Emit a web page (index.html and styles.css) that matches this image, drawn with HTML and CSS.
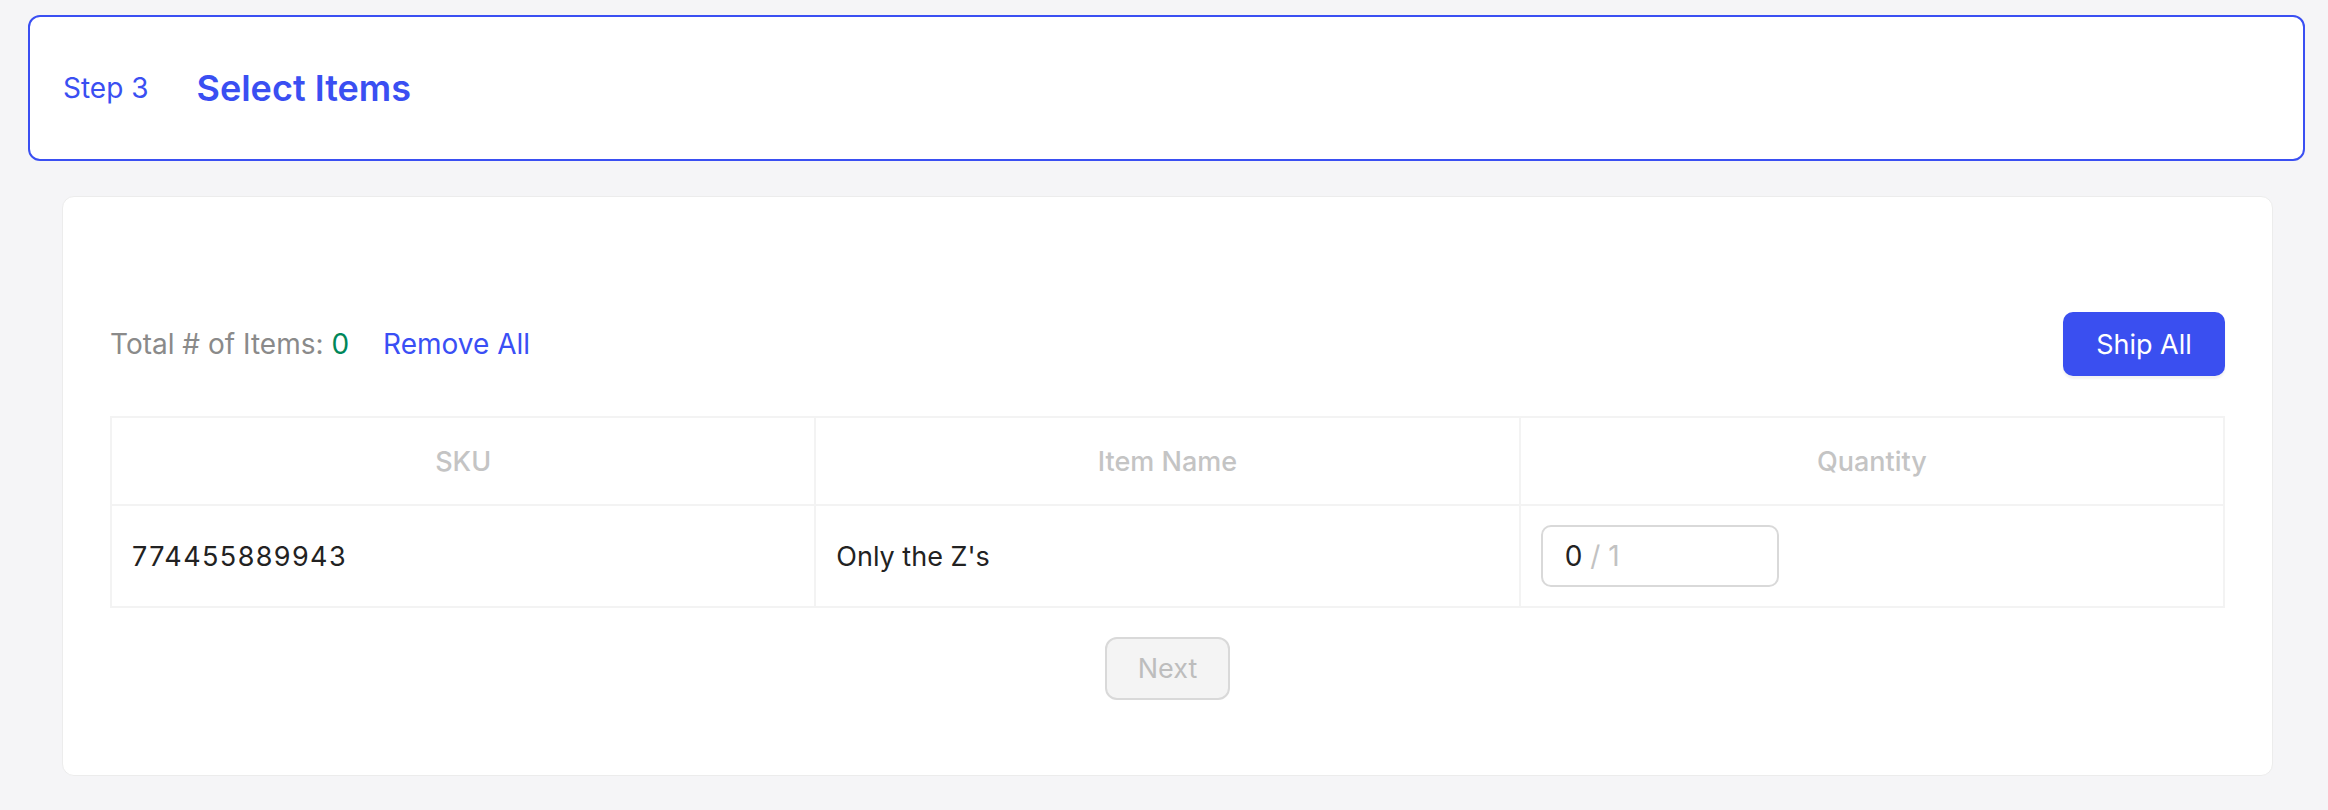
FILE: index.html
```html
<!DOCTYPE html>
<html lang="en">
<head>
<meta charset="utf-8">
<title>Select Items</title>
<link rel="stylesheet" href="styles.css">
</head>
<body>
<div class="page">
  <header class="step-header">
    <span class="step-label">Step 3</span>
    <h1 class="step-title">Select Items</h1>
  </header>
  <section class="card">
    <div class="toolbar">
      <div class="totals">
        <span class="total-label">Total # of Items: <span class="total-count">0</span></span>
        <a class="remove-all" href="#">Remove All</a>
      </div>
      <button class="btn-primary" type="button">Ship All</button>
    </div>
    <table class="items">
      <thead>
        <tr><th>SKU</th><th>Item Name</th><th>Quantity</th></tr>
      </thead>
      <tbody>
        <tr>
          <td class="sku">774455889943</td>
          <td>Only the Z's</td>
          <td><div class="qty"><span class="qty-val">0</span><span class="qty-max">/ 1</span></div></td>
        </tr>
      </tbody>
    </table>
    <div class="actions">
      <button class="btn-disabled" type="button">Next</button>
    </div>
  </section>
</div>
</body>
</html>
```
FILE: styles.css
```css
* { box-sizing: border-box; }
html, body { margin: 0; padding: 0; }
body {
  background: #f5f5f7;
  font-family: Inter, "Noto Sans", sans-serif;
  color: #222;
}
.page {
  padding: 15px 23px 0 28px;
}
.step-header {
  height: 146px;
  border: 2px solid #3a4ff2;
  border-radius: 12px;
  background: #fff;
  display: flex;
  align-items: center;
  padding-left: 33px;
  gap: 48px;
}
.step-label {
  font-size: 28px;
  color: #3a4ff2;
}
.step-title {
  margin: 0;
  font-size: 36px;
  font-weight: 600;
  color: #3a4ff2;
}
.card {
  margin: 35px 32px 0 34px;
  height: 580px;
  background: #fff;
  border: 1px solid #ececec;
  border-radius: 12px;
  padding: 115px 47px 0 47px;
}
.toolbar {
  display: flex;
  align-items: center;
  justify-content: space-between;
  height: 64px;
}
.totals {
  display: flex;
  align-items: center;
  gap: 34px;
  font-size: 28px;
}
.total-label { color: #8a8a8a; }
.total-count { color: #00875a; }
.remove-all {
  color: #3a4ff5;
  text-decoration: none;
}
.btn-primary {
  width: 162px;
  height: 64px;
  border: none;
  border-radius: 10px;
  background: #3a4ff0;
  color: #fff;
  font-family: inherit;
  font-size: 27px;
  box-shadow: 0 3px 2px rgba(0,0,0,0.05);
}
.items {
  margin-top: 40px;
  width: 100%;
  border-collapse: collapse;
  table-layout: fixed;
  border: 2px solid #f3f3f3;
}
.items th, .items td {
  border: 2px solid #f3f3f3;
  padding: 0 20px;
  font-size: 27px;
}
.items th {
  height: 88px;
  font-weight: 500;
  color: #c4c4c4;
  text-align: center;
}
.items td {
  height: 102px;
  color: #222;
  text-align: left;
}
.items td.sku {
  letter-spacing: 1.4px;
}
.qty {
  width: 238px;
  height: 62px;
  border: 2px solid #d9d9d9;
  border-radius: 10px;
  display: flex;
  align-items: center;
  padding-left: 22px;
  gap: 8px;
  font-size: 28px;
}
.qty-val { color: #222; }
.qty-max { color: #c2c2c2; }
.actions {
  display: flex;
  justify-content: center;
  margin-top: 29px;
}
.btn-disabled {
  width: 125px;
  height: 63px;
  border: 2px solid #d9d9d9;
  border-radius: 12px;
  background: #f4f4f4;
  color: #bdbdbd;
  font-family: inherit;
  font-size: 27px;
}
```
